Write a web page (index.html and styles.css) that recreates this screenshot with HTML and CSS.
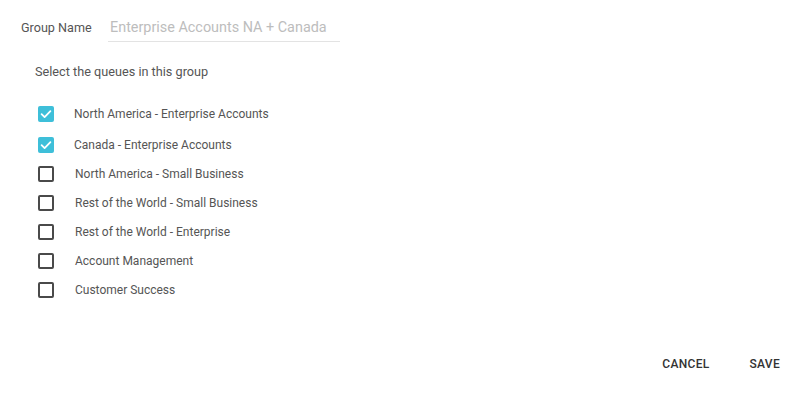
FILE: index.html
```html
<!DOCTYPE html>
<html>
<head>
<meta charset="utf-8">
<link rel="stylesheet" href="styles.css">
</head>
<body>
<div class="dialog">
  <div class="name-row">
    <label class="name-label">Group Name</label>
    <div class="name-input">Enterprise Accounts NA + Canada</div>
  </div>
  <div class="section-title">Select the queues in this group</div>
  <ul class="queues">
    <li class="queue first"><span class="box checked"><svg viewBox="0 0 16 16" width="16" height="16"><path d="M3.6 8.2 L6.6 11.1 L12.4 5.2" fill="none" stroke="#fff" stroke-width="1.8" stroke-linecap="round" stroke-linejoin="round"/></svg></span><span class="label lc">North America - Enterprise Accounts</span></li>
    <li class="queue"><span class="box checked"><svg viewBox="0 0 16 16" width="16" height="16"><path d="M3.6 8.2 L6.6 11.1 L12.4 5.2" fill="none" stroke="#fff" stroke-width="1.8" stroke-linecap="round" stroke-linejoin="round"/></svg></span><span class="label lc">Canada - Enterprise Accounts</span></li>
    <li class="queue"><span class="box"></span><span class="label">North America - Small Business</span></li>
    <li class="queue"><span class="box"></span><span class="label">Rest of the World - Small Business</span></li>
    <li class="queue"><span class="box"></span><span class="label">Rest of the World - Enterprise</span></li>
    <li class="queue"><span class="box"></span><span class="label">Account Management</span></li>
    <li class="queue"><span class="box"></span><span class="label">Customer Success</span></li>
  </ul>
  <div class="actions">
    <button class="btn cancel">CANCEL</button>
    <button class="btn save">SAVE</button>
  </div>
</div>
</body>
</html>
```
FILE: styles.css
```css
html, body {
  margin: 0;
  padding: 0;
  background: #fff;
}
body {
  font-family: Roboto, "Noto Sans", sans-serif;
  color: #555;
}
.dialog {
  width: 811px;
  height: 399px;
  display: flex;
  flex-direction: column;
}
.name-row {
  display: flex;
  align-items: flex-start;
  padding: 19px 0 0 21px;
  height: 24px;
}
.name-label {
  font-size: 12.6px;
  line-height: 18px;
  color: #555;
  width: 87px;
}
.name-input {
  width: 230px;
  font-size: 14.4px;
  line-height: 18px;
  color: #bdbdbd;
  padding-left: 2px;
  padding-bottom: 4px;
  border-bottom: 1px solid #e3e3e3;
}
.section-title {
  margin: 20px 0 0 35px;
  font-size: 12.7px;
  line-height: 18px;
  color: #555;
}
.queues {
  list-style: none;
  margin: 24px 0 0 0;
  padding: 0;
  display: flex;
  flex-direction: column;
}
.queue {
  display: flex;
  align-items: center;
  height: 17px;
  margin-bottom: 12px;
  padding-left: 38px;
}
.queue.first {
  margin-bottom: 14px;
}
.box {
  width: 16px;
  height: 16px;
  box-sizing: border-box;
  border: 2px solid #4a4a4a;
  border-radius: 2px;
  flex: none;
  display: flex;
}
.box.checked {
  border: none;
  background: #3ebfd9;
}
.label {
  font-size: 12px;
  line-height: 16px;
  color: #555;
  margin-left: 21px;
}
.label.lc {
  margin-left: 20px;
}
.actions {
  margin-top: auto;
  display: flex;
  justify-content: flex-end;
  padding: 0 31px 27px 0;
  gap: 40px;
}
.btn {
  background: none;
  border: none;
  padding: 0;
  font-family: Roboto, sans-serif;
  font-weight: 500;
  font-size: 12px;
  line-height: 16px;
  letter-spacing: 0.3px;
  color: #333;
}
```
